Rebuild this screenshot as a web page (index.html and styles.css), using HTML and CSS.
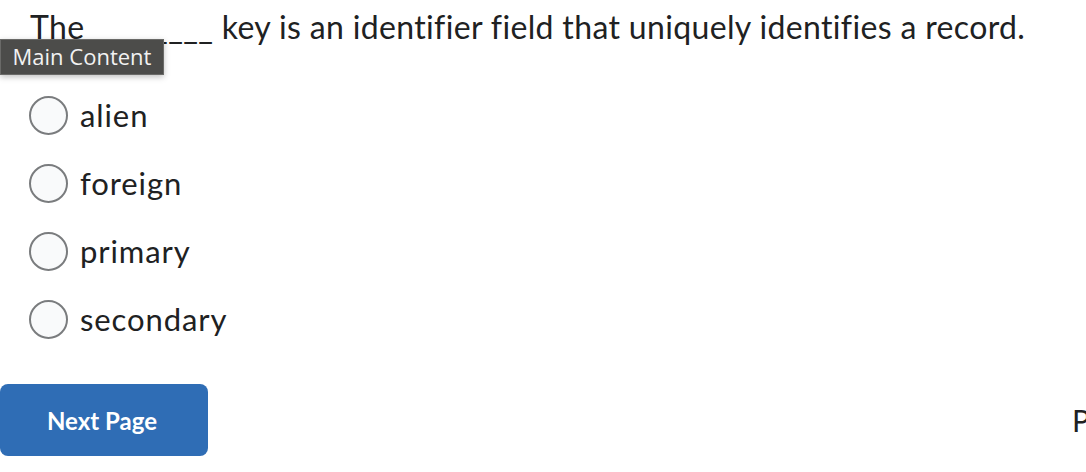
FILE: index.html
```html
<!DOCTYPE html>
<html>
<head>
<meta charset="utf-8">
<link rel="stylesheet" href="styles.css">
</head>
<body>
<div class="page">
  <div class="question">The ________ key is an identifier field that uniquely identifies a record.</div>
  <div class="tooltip">Main Content</div>
  <div class="options">
    <label class="option"><span class="radio"></span><span class="label">alien</span></label>
    <label class="option"><span class="radio"></span><span class="label">foreign</span></label>
    <label class="option"><span class="radio"></span><span class="label">primary</span></label>
    <label class="option"><span class="radio"></span><span class="label">secondary</span></label>
  </div>
  <div class="footer">
    <button class="next">Next Page</button>
    <span class="cut">P</span>
  </div>
</div>
</body>
</html>
```
FILE: styles.css
```css
html, body {
  margin: 0;
  padding: 0;
  background: #ffffff;
}
body {
  width: 1086px;
  height: 472px;
  overflow: hidden;
  font-family: Lato, "Liberation Sans", sans-serif;
  font-variant-ligatures: none;
  color: #202122;
}
.page {
  position: relative;
  padding-top: 7px;
}
.question {
  padding-left: 30px;
  font-size: 32px;
  letter-spacing: 0.35px;
  line-height: 40px;
  white-space: nowrap;
}
.blank {
  letter-spacing: 0;
}
.tooltip {
  position: absolute;
  left: 0;
  top: 39px;
  width: 164px;
  height: 36px;
  box-sizing: border-box;
  background: #4c4c4a;
  border: 1px solid #6a6a68;
  color: #f2f2f2;
  font-family: "Open Sans", "Liberation Sans", sans-serif;
  font-size: 22px;
  line-height: 33px;
  text-align: center;
  box-shadow: 0 2px 6px rgba(0,0,0,0.25);
}
.options {
  display: flex;
  flex-direction: column;
  gap: 29px;
  padding-left: 29px;
  margin-top: 49px;
}
.option {
  display: flex;
  align-items: center;
  gap: 12px;
  height: 39px;
}
.radio {
  width: 39px;
  height: 39px;
  box-sizing: border-box;
  border: 2px solid #7a7c7e;
  border-radius: 50%;
  background: #f9fafb;
}
.label {
  font-size: 31px;
  letter-spacing: 0.9px;
  line-height: 39px;
}
.footer {
  display: flex;
  justify-content: space-between;
  align-items: center;
  margin-top: 45px;
}
.next {
  width: 208px;
  height: 72px;
  border: none;
  border-radius: 8px;
  background: #2f6db5;
  color: #ffffff;
  font-family: Lato, "Liberation Sans", sans-serif;
  font-weight: 700;
  font-size: 24px;
  padding: 0 4px 0 0;
}
.cut {
  font-size: 30px;
  margin-right: -4px;
  color: #202122;
}
```
